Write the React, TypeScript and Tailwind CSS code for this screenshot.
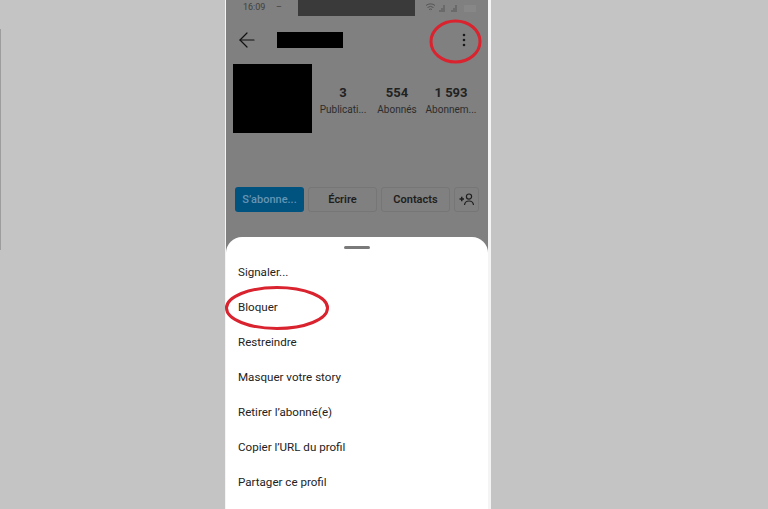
import { ArrowLeft } from "lucide-react";

const stats = [
  { value: "3", label: "Publicati..." },
  { value: "554", label: "Abonnés" },
  { value: "1 593", label: "Abonnem..." },
];

const menuItems = [
  "Signaler...",
  "Bloquer",
  "Restreindre",
  "Masquer votre story",
  "Retirer l’abonné(e)",
  "Copier l’URL du profil",
  "Partager ce profil",
];

function StatusBar() {
  return (
    <div className="flex h-[16px] items-center pl-[17px] text-[9px] text-[#3f3f3f]">
      <span className="w-[33px]">16:09</span>
      <span className="w-[22px]">–</span>
      <div className="h-[16px] w-[117px] bg-[#3a3a3a]" />
      <div className="ml-[10px] flex items-center gap-[3px]">
        <svg width="36" height="10" viewBox="0 0 36 10" fill="none" stroke="#555" strokeWidth="1">
          <path d="M1 2.500a7 7 0 0 1 9 0M2.500 4.500a5 5 0 0 1 6 0M4 6.500a2.500 2.500 0 0 1 3 0M5.500 8.500h.1" />
          <path d="M15 9V7M17 9V5M19 9V2M27 9V7M29 9V5M31 9V2" />
        </svg>
        <div className="h-[7px] w-[12px] rounded-[1px] bg-[#878787]" />
      </div>
    </div>
  );
}

function Stats() {
  return (
    <div className="ml-[6px] flex gap-[4px] pt-[21px]">
      {stats.map((stat) => (
        <div key={stat.label} className="flex w-[50px] flex-col items-center">
          <span className="text-[13px] leading-[16px] font-bold text-[#222]">{stat.value}</span>
          <span className="mt-[2px] text-[10px] leading-[14px] whitespace-nowrap text-[#2c2c2c]">{stat.label}</span>
        </div>
      ))}
    </div>
  );
}

function ActionButtons() {
  const outlined = "flex h-[25px] w-[69px] items-center justify-center rounded-[3px] border border-[#767676] pt-px text-[11px] font-semibold text-[#1e1e1e]";
  return (
    <div className="mt-[54px] flex gap-[4px] pl-[9px]">
      <button className="flex h-[25px] w-[69px] items-center justify-center rounded-[3px] bg-[#00527f] pt-px text-[11px] font-medium text-[#6595b5]">
        S’abonne...
      </button>
      <button className={outlined}>Écrire</button>
      <button className={outlined}>Contacts</button>
      <button className="flex h-[25px] w-[25px] items-center justify-center rounded-[3px] border border-[#767676]">
        <svg width="16" height="13" viewBox="0 0 16 13" fill="none" stroke="#1e1e1e" strokeWidth="1.200">
          <path d="M0.500 6h4.500M2.750 3.750v4.500" strokeWidth="1.500" />
          <circle cx="10" cy="3.600" r="2.600" />
          <path d="M5.500 12c.3-2.600 2-4 4.500-4s4.200 1.400 4.500 4" />
        </svg>
      </button>
    </div>
  );
}

export default function App() {
  return (
    <div className="relative flex h-[509px] w-[768px] overflow-hidden bg-[#c4c4c4] pl-[225px] font-['Roboto',sans-serif]">
      <div className="absolute top-[29px] left-0 h-[221px] w-px bg-[#9d9d9d]" />

      <div className="flex h-[509px] w-[266px] flex-col border-r-[3px] border-l border-[#f4f4f4] bg-[#808080]">
        <StatusBar />

        <div className="flex h-[48px] items-center pr-[22px] pl-[9px]">
          <ArrowLeft size={24} strokeWidth={1.200} className="text-[#111]" />
          <div className="ml-[18px] h-[16px] w-[66px] bg-black" />
          <svg width="4" height="14" viewBox="0 0 4 14" className="ml-auto" fill="#1a1a1a">
            <circle cx="2" cy="2" r="1.300" />
            <circle cx="2" cy="7" r="1.300" />
            <circle cx="2" cy="12" r="1.300" />
          </svg>
        </div>

        <div className="flex pl-[7px]">
          <div className="h-[69px] w-[79px] bg-black" />
          <Stats />
        </div>

        <ActionButtons />

        <div className="mt-[25px] flex-1 rounded-t-[16px] bg-white pt-[9px]">
          <div className="mx-auto h-[3px] w-[26px] rounded-full bg-[#7a7a7a]" />
          <ul className="mt-[6px] pl-[12px]">
            {menuItems.map((item) => (
              <li key={item} className="flex h-[35px] items-center text-[11.600px] text-[#222]">
                {item}
              </li>
            ))}
          </ul>
        </div>
      </div>

      <svg className="pointer-events-none absolute top-0 left-0" width="768" height="509" fill="none" stroke="#d9232e" strokeWidth="3">
        <ellipse cx="455.500" cy="41.500" rx="24.500" ry="20.500" />
        <ellipse cx="277" cy="308" rx="50.500" ry="20.500" />
      </svg>
    </div>
  );
}
